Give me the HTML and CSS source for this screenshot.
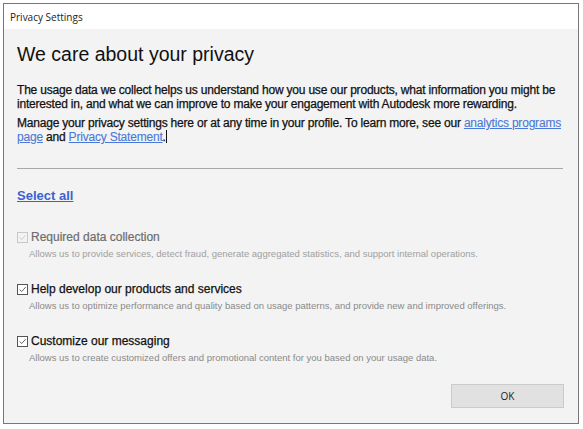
FILE: index.html
```html
<!DOCTYPE html>
<html>
<head>
<meta charset="utf-8">
<link rel="stylesheet" href="styles.css">
</head>
<body>
<div class="window">
  <div class="titlebar">Privacy Settings</div>
  <div class="content">
    <h1 class="heading">We care about your privacy</h1>
    <p class="para">The usage data we collect helps us understand how you use our products, what information you might be interested in, and what we can improve to make your engagement with Autodesk more rewarding.</p>
    <p class="para">Manage your privacy settings here or at any time in your profile. To learn more, see our <a class="link">analytics programs</a><br><a class="link">page</a> and <a class="link">Privacy Statement</a>.<span class="caret"></span></p>
    <hr class="sep">
    <a class="select-all">Select all</a>
    <div class="options">
      <div class="option disabled">
        <div class="opt-row">
          <span class="box"><svg viewBox="0 0 11 11" width="11" height="11"><path d="M2 5.5 L4.5 8 L9.5 2.5" fill="none" stroke="#c4c4c4" stroke-width="1"/></svg></span>
          <span class="opt-label">Required data collection</span>
        </div>
        <div class="opt-desc">Allows us to provide services, detect fraud, generate aggregated statistics, and support internal operations.</div>
      </div>
      <div class="option">
        <div class="opt-row">
          <span class="box"><svg viewBox="0 0 11 11" width="11" height="11"><path d="M2 5.5 L4.5 8 L9.5 2.5" fill="none" stroke="#444" stroke-width="1"/></svg></span>
          <span class="opt-label">Help develop our products and services</span>
        </div>
        <div class="opt-desc">Allows us to optimize performance and quality based on usage patterns, and provide new and improved offerings.</div>
      </div>
      <div class="option">
        <div class="opt-row">
          <span class="box"><svg viewBox="0 0 11 11" width="11" height="11"><path d="M2 5.5 L4.5 8 L9.5 2.5" fill="none" stroke="#444" stroke-width="1"/></svg></span>
          <span class="opt-label">Customize our messaging</span>
        </div>
        <div class="opt-desc">Allows us to create customized offers and promotional content for you based on your usage data.</div>
      </div>
    </div>
    <div class="footer">
      <button class="ok">OK</button>
    </div>
  </div>
</div>
</body>
</html>
```

FILE: styles.css
```css
html, body {
  margin: 0;
  padding: 0;
  background: #ffffff;
}
body {
  width: 583px;
  height: 429px;
  font-family: "Liberation Sans", Arial, sans-serif;
  padding: 3px 0 0 3px;
  box-sizing: border-box;
}
.window {
  width: 576px;
  height: 421px;
  border: 1px solid #777;
  box-sizing: border-box;
  display: flex;
  flex-direction: column;
  background: #f3f3f3;
}
.titlebar {
  height: 25px;
  background: #ffffff;
  font-family: "Open Sans", "Noto Sans", sans-serif;
  font-size: 10px;
  color: #222;
  display: flex;
  align-items: center;
  padding-left: 6px;
  flex: none;
}
.content {
  flex: 1;
  padding: 12px 12px 0 13px;
  display: flex;
  flex-direction: column;
}
.heading {
  margin: 0 0 16px 0;
  font-size: 19.5px;
  font-weight: normal;
  color: #111;
  line-height: 26px;
}
.para {
  margin: 0 0 5px 0;
  font-size: 12px;
  line-height: 14px;
  color: #111;
  letter-spacing: -0.2px;
  -webkit-text-stroke: 0.25px #111;
}
.link {
  color: #4a78d8;
  text-decoration: underline;
  -webkit-text-stroke: 0.1px #4a78d8;
}
.caret {
  display: inline-block;
  width: 1px;
  height: 13px;
  background: #111;
  vertical-align: -2px;
}
.sep {
  margin: 19px 3px 0 0;
  border: none;
  border-top: 1px solid #a8a8a8;
  height: 0;
}
.select-all {
  margin-top: 19px;
  font-size: 13px;
  font-weight: bold;
  color: #3a62d0;
  text-decoration: underline;
  align-self: flex-start;
  line-height: 16px;
}
.options {
  margin-top: 25px;
  display: flex;
  flex-direction: column;
  gap: 21px;
}
.option {
  display: flex;
  flex-direction: column;
}
.opt-row {
  display: flex;
  align-items: center;
  gap: 3px;
  height: 16px;
}
.box {
  width: 11px;
  height: 11px;
  border: 1px solid #555;
  box-sizing: border-box;
  display: flex;
  align-items: center;
  justify-content: center;
  background: #fff;
}
.box svg { display: block; width: 9px; height: 9px; }
.opt-label {
  font-size: 12px;
  color: #111;
  -webkit-text-stroke: 0.25px #111;
}
.opt-desc {
  margin-top: 3px;
  padding-left: 12px;
  font-size: 9.5px;
  line-height: 12px;
  color: #8a8a8a;
}
.disabled .box { border-color: #c8c8c8; background: #f3f3f3; }
.disabled .opt-label { color: #6d6d6d; -webkit-text-stroke: 0.2px #6d6d6d; }
.disabled .opt-desc { color: #a0a0a0; }
.footer {
  margin-top: auto;
  display: flex;
  justify-content: flex-end;
  padding: 0 2px 15px 0;
}
.ok {
  width: 113px;
  height: 24px;
  background: #e1e1e1;
  border: 1px solid #cbcbcb;
  font-family: "Open Sans", "Noto Sans", sans-serif;
  font-size: 10px;
  color: #222;
  padding: 0;
}
```
